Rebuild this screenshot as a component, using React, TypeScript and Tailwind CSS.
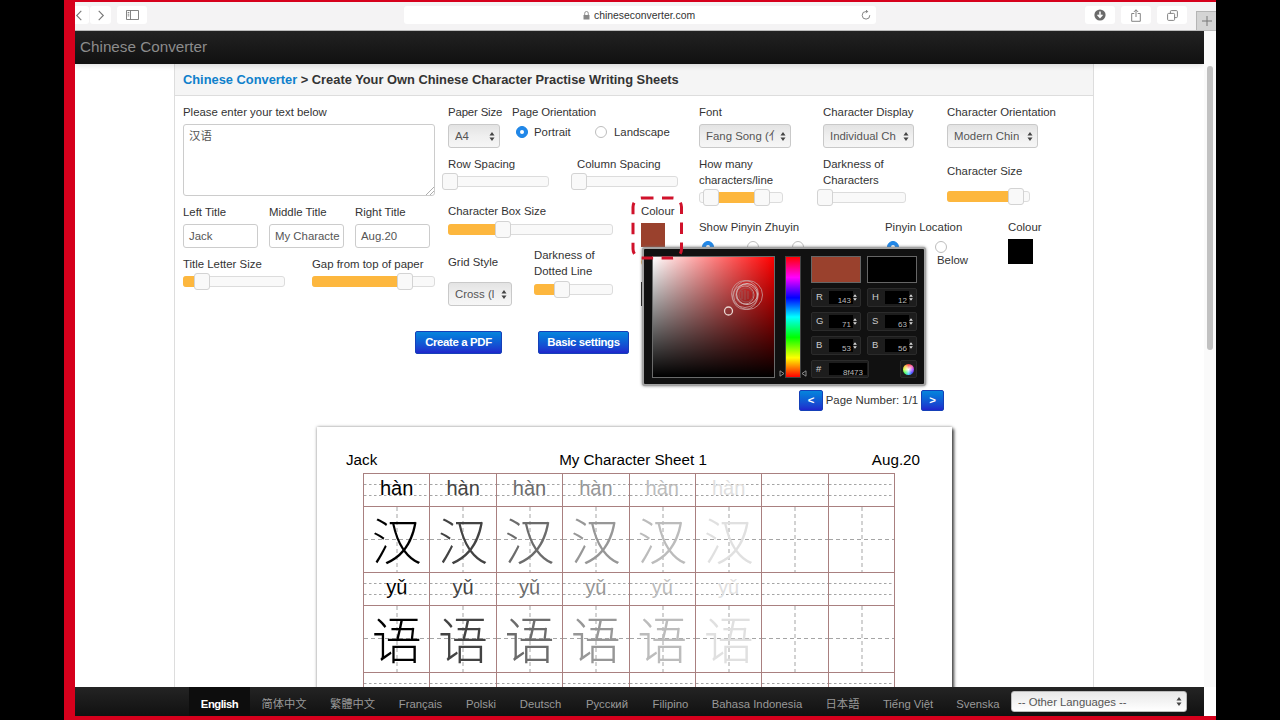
import React from 'react'
import clsx from 'clsx'

// ======= Data =======
const LANGS = [
  { name: '简体中文', w: 'w-[68px]' },
  { name: '繁體中文', w: 'w-[69px]' },
  { name: 'Français', w: 'w-[67px]' },
  { name: 'Polski', w: 'w-[54px]' },
  { name: 'Deutsch', w: 'w-[65px]' },
  { name: 'Русский', w: 'w-[68px]' },
  { name: 'Filipino', w: 'w-[59px]' },
  { name: 'Bahasa Indonesia', w: 'w-[114px]' },
  { name: '日本語', w: 'w-[57px]' },
  { name: 'Tiếng Việt', w: 'w-[74px]' },
  { name: 'Svenska', w: 'w-[66px]' },
]

const SHADES = ['#000000', '#434343', '#6c6c6c', '#979797', '#bcbcbc', '#e0e0e0', '', '']

const WORDS = [
  { pinyin: 'hàn', char: '汉' },
  { pinyin: 'yǔ', char: '语' },
]

// ======= Form controls =======
function Label({ children, className }: { children: React.ReactNode; className?: string }) {
  return <div className={clsx('h-4 whitespace-nowrap leading-4', className)}>{children}</div>
}

type SliderProps = {
  className: string
  thumbs: number[]
  fill?: [number, number]
}

function Slider({ className, thumbs, fill }: SliderProps) {
  return (
    <div className={clsx('relative h-[11px] rounded-[3px] border border-[#dcdcdc] bg-[#f9f9f9]', className)}>
      {fill && (
        <div
          className="absolute -top-px h-[11px] rounded-l-[3px] bg-[#fdb73e]"
          style={{ left: fill[0] - 1, width: fill[1] - fill[0] }}
        />
      )}
      {thumbs.map((x) => (
        <div
          key={x}
          className="absolute -top-[4px] h-[17px] w-4 rounded-[3px] border border-[#d3d3d3] bg-[#f9f9f9]"
          style={{ left: x - 1 }}
        />
      ))}
    </div>
  )
}

function Arrows({ className }: { className?: string }) {
  return (
    <svg viewBox="0 0 6 10" className={clsx('shrink-0', className ?? 'h-[9px] w-[6px] text-[#444]')} fill="currentColor">
      <path d="M3 0 5.8 4H.2zM3 10 .2 6h5.6z" />
    </svg>
  )
}

function Select({ text, className }: { text: string; className?: string }) {
  return (
    <div
      className={clsx(
        'flex h-6 items-center justify-between rounded-[3px] border border-[#c9c9c9] bg-linear-to-b from-[#e3e3e3] via-[#efefef] to-[#f6f6f6] pl-1.5 pr-1 text-[#555]',
        className,
      )}
    >
      <span className="overflow-hidden whitespace-nowrap pt-px">{text}</span>
      <Arrows />
    </div>
  )
}

function Radio({ on }: { on?: boolean }) {
  return (
    <div
      className={clsx(
        'flex h-3 w-3 shrink-0 items-center justify-center rounded-full border',
        on ? 'border-[#1a82e2] bg-[#2188ea]' : 'border-[#bdbdbd] bg-white',
      )}
    >
      {on && <div className="h-1 w-1 rounded-full bg-white" />}
    </div>
  )
}

function Input({ value }: { value: string }) {
  return (
    <div className="flex h-6 w-[75px] items-center rounded-[3px] border border-[#ccc] pl-[5px] pt-px text-[#555]">
      <span className="whitespace-nowrap">{value}</span>
    </div>
  )
}

function Button({ children, className }: { children: React.ReactNode; className?: string }) {
  return (
    <div
      className={clsx(
        'flex items-center justify-center rounded-[2px] border border-[#1540b8] bg-linear-to-b from-[#0785dc] to-[#2025cc] font-bold text-white',
        className,
      )}
    >
      {children}
    </div>
  )
}

// ======= Browser chrome =======
function Toolbar() {
  return (
    <div className="flex h-[29px] shrink-0 items-center border-b border-[#bbb] bg-[#f4f3f4] text-[#777]">
      <div className="-mt-0.5 flex h-[18px] w-[14px] items-center rounded-r-[3px] bg-white">
        <svg viewBox="0 0 8 12" className="h-[11px] w-2" fill="none" stroke="currentColor" strokeWidth="1.2">
          <path d="M6.5 1 1.5 6l5 5" />
        </svg>
      </div>
      <div className="-mt-0.5 ml-px flex h-[18px] w-[21px] items-center justify-center rounded-[3px] bg-white">
        <svg viewBox="0 0 8 12" className="h-[11px] w-2" fill="none" stroke="currentColor" strokeWidth="1.2">
          <path d="m1.5 1 5 5-5 5" />
        </svg>
      </div>
      <div className="-mt-0.5 ml-[6px] flex h-[18px] w-[30px] items-center justify-center rounded-[3px] bg-white">
        <svg viewBox="0 0 13 10" className="h-[10px] w-[13px]" fill="none" stroke="currentColor" strokeWidth="0.9">
          <path d="M.5.5h12v9H.5zM4.5.5v9M1.7 2.5h1.6M1.7 4.2h1.6M1.7 5.9h1.6" />
        </svg>
      </div>
      <div className="-mt-0.5 ml-[257px] flex h-[18px] w-[472px] items-center rounded-[3px] bg-white">
        <div className="w-[179px]" />
        <svg viewBox="0 0 7 9" className="h-[9px] w-[7px]" fill="#888">
          <path d="M.5 4h6v4.5h-6z" />
          <path d="M1.7 4V2.3a1.8 1.8 0 0 1 3.6 0V4" fill="none" stroke="#888" strokeWidth=".9" />
        </svg>
        <span className="ml-1 pt-px text-[10.4px] text-[#333]">chineseconverter.com</span>
        <svg viewBox="0 0 10 10" className="ml-auto mr-[5px] h-[10px] w-[10px]" fill="none" stroke="currentColor">
          <path d="M8.8 5.2A3.8 3.8 0 1 1 5 1.5h1.5M5 0l1.7 1.5L5 3.2" strokeWidth=".9" />
        </svg>
      </div>
      <div className="-mt-0.5 ml-[209px] flex h-[18px] w-[30px] items-center justify-center rounded-[3px] bg-white">
        <svg viewBox="0 0 12 12" className="h-3 w-3">
          <circle cx="6" cy="6" r="5.6" fill="#6a6a6a" />
          <path d="M6 2.6v5M3.6 5.8 6 8.4l2.4-2.6" fill="none" stroke="#fff" strokeWidth="1.5" />
        </svg>
      </div>
      <div className="-mt-0.5 ml-1.5 flex h-[18px] w-[30px] items-center justify-center rounded-[3px] bg-white">
        <svg viewBox="0 0 10 13" className="h-[13px] w-[10px]" fill="none" stroke="currentColor" strokeWidth=".9">
          <path d="M3.3 4.5H.7v7.8h8.6V4.5H6.7M5 8V.8M2.8 3 5 .8 7.2 3" />
        </svg>
      </div>
      <div className="-mt-0.5 ml-1.5 flex h-[18px] w-[30px] items-center justify-center rounded-[3px] bg-white">
        <svg viewBox="0 0 11 11" className="h-[11px] w-[11px]" fill="none" stroke="currentColor" strokeWidth=".9">
          <rect x=".6" y="3.4" width="7" height="7" rx="1" />
          <path d="M3.4 3.4V1.6a1 1 0 0 1 1-1h5a1 1 0 0 1 1 1v5a1 1 0 0 1-1 1H7.6" />
        </svg>
      </div>
      <div className="ml-auto flex h-[19px] w-5 items-center justify-center self-end border-l border-t border-[#b5b5b5] bg-[#d4d4d4]">
        <svg viewBox="0 0 10 10" className="h-[10px] w-[10px]" stroke="#777" strokeWidth="1">
          <path d="M5 0v10M0 5h10" />
        </svg>
      </div>
    </div>
  )
}

// ======= Form columns =======
function TextColumn() {
  return (
    <div className="w-[265px] shrink-0">
      <Label>Please enter your text below</Label>
      <div className="relative mt-1 h-[72px] w-[252px] rounded-[3px] border border-[#ccc] px-[5px] py-[3px] leading-4 text-[#555]">
        汉语
        <svg viewBox="0 0 8 8" className="absolute bottom-0 right-0 h-2 w-2" stroke="#999" strokeWidth=".8">
          <path d="M0 8 8 0M4 8l4-4" />
        </svg>
      </div>
      <div className="mt-2 flex gap-[11px]">
        <Label className="w-[75px]">Left Title</Label>
        <Label className="w-[75px]">Middle Title</Label>
        <Label className="w-[75px]">Right Title</Label>
      </div>
      <div className="mt-1 flex gap-[11px]">
        <Input value="Jack" />
        <Input value="My Characte" />
        <Input value="Aug.20" />
      </div>
      <div className="mt-2 flex">
        <div className="w-[129px]">
          <Label>Title Letter Size</Label>
          <Slider className="mt-1 w-[102px]" fill={[0, 12]} thumbs={[11]} />
        </div>
        <div>
          <Label>Gap from top of paper</Label>
          <Slider className="mt-1 w-[123px]" fill={[0, 86]} thumbs={[85]} />
        </div>
      </div>
    </div>
  )
}

function PaperColumn() {
  return (
    <div className="w-[251px] shrink-0">
      <div className="flex h-[52px]">
        <div className="w-16">
          <Label className="tracking-[-0.15px]">Paper Size</Label>
          <Select className="mt-1 w-[52px]" text="A4" />
        </div>
        <div>
          <Label className="tracking-[-0.1px]">Page Orientation</Label>
          <div className="mt-1 flex items-center pl-1">
            <Radio on />
            <Label className="ml-1.5 w-[61px]">Portrait</Label>
            <Radio />
            <Label className="ml-[7px]">Landscape</Label>
          </div>
        </div>
      </div>
      <div className="flex h-[47px]">
        <div className="w-[129px]">
          <Label>Row Spacing</Label>
          <Slider className="mt-1 w-[101px]" thumbs={[-6]} />
        </div>
        <div>
          <Label>Column Spacing</Label>
          <Slider className="mt-1 w-[101px]" thumbs={[-6]} />
        </div>
      </div>
      <div className="flex">
        <div className="w-[193px]">
          <Label>Character Box Size</Label>
          <Slider className="mt-[5px] w-[165px]" fill={[0, 48]} thumbs={[47]} />
          <div className="mt-3 flex">
            <div className="w-[86px] pt-[7px]">
              <Label>Grid Style</Label>
              <Select className="mt-3 w-16" text="Cross (l" />
            </div>
            <div>
              <Label>Darkness of</Label>
              <Label>Dotted Line</Label>
              <Slider className="mt-[5px] w-[79px]" fill={[0, 21]} thumbs={[20]} />
            </div>
          </div>
        </div>
        <div>
          <Label>Colour</Label>
          <div className="mt-1 h-6 w-6 bg-[#9a412d]" />
          <Label className="mt-[7px]">Colour</Label>
          <div className="mt-3 h-6 w-6 bg-black" />
        </div>
      </div>
    </div>
  )
}

function CharacterColumn() {
  return (
    <div>
      <div className="flex h-[52px]">
        <div className="w-[124px]">
          <Label>Font</Label>
          <Select className="mt-1 w-[92px]" text="Fang Song (亻" />
        </div>
        <div className="w-[124px]">
          <Label>Character Display</Label>
          <Select className="mt-1 w-[91px]" text="Individual Ch" />
        </div>
        <div>
          <Label>Character Orientation</Label>
          <Select className="mt-1 w-[91px]" text="Modern Chin" />
        </div>
      </div>
      <div className="flex h-[63px]">
        <div className="w-[124px]">
          <Label>How many</Label>
          <Label>characters/line</Label>
          <Slider className="mt-1 w-[84px]" fill={[12, 60]} thumbs={[4, 55]} />
        </div>
        <div className="w-[124px]">
          <Label>Darkness of</Label>
          <Label>Characters</Label>
          <Slider className="mt-1 w-[83px]" thumbs={[-6]} />
        </div>
        <div className="pt-[7px]">
          <Label>Character Size</Label>
          <Slider className="mt-3 w-[83px]" fill={[0, 62]} thumbs={[61]} />
        </div>
      </div>
      <div className="flex">
        <div className="w-[186px]">
          <Label>Show Pinyin Zhuyin</Label>
          <div className="mt-1.5 flex gap-[33px] pl-[3px]">
            <Radio on />
            <Radio />
            <Radio />
          </div>
        </div>
        <div className="w-[123px]">
          <Label>Pinyin Location</Label>
          <div className="mt-1.5 flex gap-9 pl-0.5">
            <Radio on />
            <div>
              <Radio />
              <Label className="-mt-px ml-0.5">Below</Label>
            </div>
          </div>
        </div>
        <div>
          <Label>Colour</Label>
          <div className="mt-1 h-[25px] w-[25px] bg-black" />
        </div>
      </div>
    </div>
  )
}

// ======= Colour picker popup =======
function PickerField({ name, value }: { name: string; value: string }) {
  return (
    <div className="flex h-[19px] w-[50px] items-center rounded-[2px] border border-[#2b2b2b] bg-[#1d1d1d] pl-1 pr-[3px] text-[9.5px] text-[#ccc]">
      <span className="w-[13px]">{name}</span>
      <div className="h-[13px] w-6 overflow-hidden bg-black pr-0.5 pt-[5px] text-right text-[8px] leading-[10px] text-[#bbb]">
        {value}
      </div>
      <Arrows className="ml-auto h-[7px] w-[4px] text-[#ddd]" />
    </div>
  )
}

function ColourPicker() {
  return (
    <div className="absolute left-[567px] top-[247px] flex h-[139px] w-[284px] rounded-[3px] border-2 border-[#a3a3a3] bg-[#111] pl-[8px] pt-[7px] shadow-[0_0_3px_#777]">
      <div className="relative h-[122px] w-[123px] border border-[#6b6b6b] bg-[#ff0000]">
        <div className="absolute inset-0 bg-linear-to-r from-white to-transparent" />
        <div className="absolute inset-0 bg-linear-to-t from-black to-transparent" />
        <svg viewBox="0 0 121 120" className="absolute inset-0 h-[120px] w-[121px]" fill="none">
          <circle cx="75.5" cy="54" r="4" stroke="#e8d5d0" strokeWidth="1.3" />
          <g stroke="#c9a0a0" strokeWidth=".8">
            <circle cx="95" cy="38" r="14.5" />
            <circle cx="92" cy="37" r="13.5" />
            <circle cx="92" cy="40" r="12.5" />
            <circle cx="94" cy="37" r="10.5" stroke="#ddd" />
            <circle cx="92" cy="38" r="9" />
            <circle cx="93" cy="38" r="7" stroke="#9b5a5a" />
            <path d="M89 34v8M92 33v10M95 34v8" stroke="#9b5a5a" />
          </g>
        </svg>
      </div>
      <div className="relative ml-[10px] h-[122px] w-4 border border-[#444] bg-[linear-gradient(to_bottom,#f00,#f0f_17%,#00f_34%,#0ff_50%,#0f0_67%,#ff0_84%,#f00)]">
        <svg viewBox="0 0 28 7" className="absolute -left-[7px] bottom-0 h-[7px] w-7" fill="#111" stroke="#999" strokeWidth=".9">
          <path d="M1 .8v5.4l4-2.7zM27 .8v5.4l-4-2.7z" />
        </svg>
      </div>
      <div className="ml-[10px]">
        <div className="flex gap-[6px]">
          <div className="h-[27px] w-[50px] border border-[#666] bg-[#9a412d]" />
          <div className="h-[27px] w-[50px] border border-[#666] bg-black" />
        </div>
        <div className="mt-[5px] grid w-[106px] grid-cols-2 gap-x-[6px] gap-y-[5px]">
          <PickerField name="R" value="143" />
          <PickerField name="H" value="12" />
          <PickerField name="G" value="71" />
          <PickerField name="S" value="63" />
          <PickerField name="B" value="53" />
          <PickerField name="B" value="56" />
        </div>
        <div className="mt-[5px] flex w-[106px] justify-between">
          <div className="flex h-[18px] w-[58px] items-center rounded-[2px] border border-[#2b2b2b] bg-[#1d1d1d] pl-1 text-[9.5px] text-[#ccc]">
            <span className="w-[13px]">#</span>
            <div className="h-3 w-[38px] overflow-hidden bg-black pr-1 pt-[5px] text-right text-[8px] leading-[10px] text-[#bbb]">
              8f473
            </div>
          </div>
          <div className="flex h-[18px] w-[17px] items-center justify-center rounded-[2px] border border-[#2b2b2b] bg-[#1d1d1d]">
            <div className="h-[11px] w-[11px] rounded-full bg-[radial-gradient(circle,#fff,transparent_65%),conic-gradient(#f44,#f6a,#a4f,#44f,#4cf,#4f6,#cf4,#fc4,#f44)]" />
          </div>
        </div>
      </div>
    </div>
  )
}

// ======= Worksheet =======
function PinyinCell({ text, colour }: { text: string; colour: string }) {
  return (
    <div className="relative h-full border-r border-b border-[#a98080]">
      <svg className="absolute inset-0 h-full w-full" stroke="#a5a5a5" strokeDasharray="2.5 2.5">
        <path d="M0 10.5H67M0 21.5H67" />
      </svg>
      <div className="relative text-center text-[20px] leading-[28px]" style={{ color: colour }}>
        {text}
      </div>
    </div>
  )
}

function CharCell({ text, colour }: { text: string; colour: string }) {
  return (
    <div className="relative h-full border-r border-b border-[#a98080]">
      <svg className="absolute inset-0 h-full w-full" stroke="#a5a5a5" strokeDasharray="4 3">
        <path d="M33 0V67M0 32.5H67" />
      </svg>
      <div
        className="relative text-center font-['Noto_Sans_CJK_SC',sans-serif] text-[50px] font-light leading-[62px]"
        style={{ color: colour }}
      >
        {text}
      </div>
    </div>
  )
}

function Worksheet() {
  return (
    <div className="ml-[142px] mt-4 h-[320px] w-[635px] bg-white shadow-[2px_2px_3px_#444,0_0_3px_#999]">
      <div className="grid grid-cols-[213px_1fr_213px] pl-[29px] pr-8 pt-[23px] text-[15.2px] leading-5 text-black">
        <span>Jack</span>
        <span className="whitespace-nowrap text-center">My Character Sheet 1</span>
        <span className="text-right">Aug.20</span>
      </div>
      <div className="ml-[46px] mt-[3px] grid w-[532px] grid-cols-[repeat(8,66.4px)] grid-rows-[33px_66.4px_33px_66.4px_33px] border-l border-t border-[#a98080]">
        {WORDS.map((word) => (
          <React.Fragment key={word.char}>
            {SHADES.map((colour, i) => (
              <PinyinCell key={i} text={colour && word.pinyin} colour={colour} />
            ))}
            {SHADES.map((colour, i) => (
              <CharCell key={i} text={colour && word.char} colour={colour} />
            ))}
          </React.Fragment>
        ))}
        {SHADES.map((_, i) => (
          <PinyinCell key={i} text="" colour="" />
        ))}
      </div>
    </div>
  )
}

// ======= Footer =======
function LanguageBar() {
  return (
    <div className="mr-3 flex h-[29px] shrink-0 items-center bg-linear-to-b from-[#242424] to-[#111] pl-[114px] text-[11.3px] text-[#999]">
      <div className="flex h-full w-[61px] items-center justify-center bg-[#0d0d0d] pt-1.5 font-bold text-white">
        <span className="tracking-[-0.5px]">English</span>
      </div>
      {LANGS.map((l) => (
        <div key={l.name} className={clsx('shrink-0 whitespace-nowrap pt-1.5 text-center', l.w)}>
          {l.name}
        </div>
      ))}
      <div className="flex h-[21px] w-[176px] items-center justify-between rounded-[3px] border border-[#bbb] bg-linear-to-b from-[#e8e8e8] to-white px-1.5 text-[#555]">
        <span className="pt-px">-- Other Languages --</span>
        <Arrows className="-mr-0.5 h-[9px] w-[6px] text-[#444]" />
      </div>
    </div>
  )
}

export default function App() {
  return (
    <div className="h-[720px] w-[1280px] overflow-hidden bg-black pl-16 font-['Liberation_Sans','Noto_Sans_CJK_SC',sans-serif] text-[11.4px] text-[#333]">
      <div className="h-full w-[1152px] bg-[#d6001c] pb-1 pl-[11px] pt-[2px]">
        <div className="flex h-full flex-col bg-white">
          <Toolbar />
          <div className="relative flex h-[656px] shrink-0">
            <div className="relative flex w-[1129px] flex-col overflow-hidden">
              <div className="relative z-10 flex h-[33px] shrink-0 items-center bg-linear-to-b from-[#222] to-[#111] pl-[5px] text-[15.25px] text-[#8c8c8c] shadow-[0_1px_6px_rgba(0,0,0,.15)]">
                Chinese Converter
              </div>
              <div className="ml-[99px] w-[920px] flex-1 border-x border-[#ddd]">
                <div className="flex h-8 items-center border-b border-[#ddd] bg-[#f5f5f5] pl-2 text-[12.85px] font-bold">
                  <span className="text-[#0f80cb]">Chinese Converter</span>
                  <span className="whitespace-pre"> &gt; Create Your Own Chinese Character Practise Writing Sheets</span>
                </div>
                <div className="flex h-[235px] pl-2 pt-2">
                  <TextColumn />
                  <PaperColumn />
                  <CharacterColumn />
                </div>
                <div className="flex gap-9 pl-[240px] tracking-[-0.35px]">
                  <Button className="h-[23px] w-[87px]">Create a PDF</Button>
                  <Button className="h-[23px] w-[91px]">Basic settings</Button>
                </div>
                <div className="mt-9 flex h-[21px] items-center pl-[624px]">
                  <Button className="h-[21px] w-6">&lt;</Button>
                  <span className="w-[98px] text-center">Page Number: 1/1</span>
                  <Button className="h-[21px] w-[23px]">&gt;</Button>
                </div>
                <Worksheet />
              </div>
            </div>
            <div className="w-3 bg-[#fafafa] pl-[3px] pt-[35px]">
              <div className="h-[284px] w-[6px] rounded-full bg-[#c1c1c1]" />
            </div>
            <div className="absolute left-0 top-[-31px]">
              <ColourPicker />
              {/* Highlight marker around the colour field */}
              <svg className="absolute left-[555px] top-[193px] h-[70px] w-[56px]" viewBox="0 0 56 70" fill="none">
                <rect x="3" y="5" width="48.5" height="60" rx="9" stroke="#d0122b" strokeWidth="3" strokeDasharray="11.5 8.5" />
              </svg>
            </div>
          </div>
          <LanguageBar />
        </div>
      </div>
    </div>
  )
}
